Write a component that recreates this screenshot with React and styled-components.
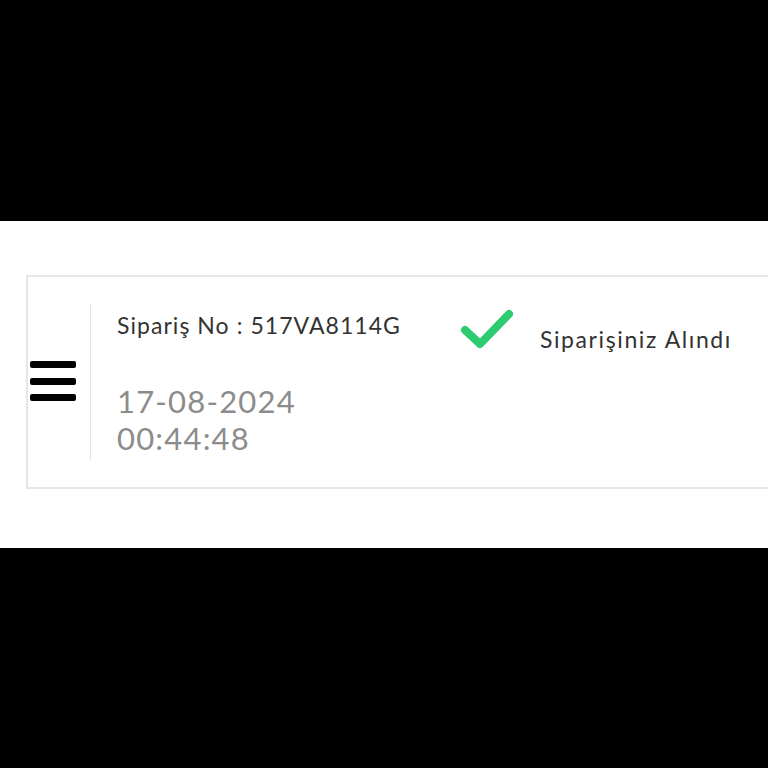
import React from 'react';
import styled, { createGlobalStyle } from 'styled-components';

const GlobalStyle = createGlobalStyle`
  html, body {
    margin: 0;
    padding: 0;
    background: #000;
  }
  body {
    font-family: 'Lato', 'Open Sans', sans-serif;
  }
`;

const Page = styled.div`
  width: 768px;
  height: 768px;
  display: flex;
  flex-direction: column;
  background: #000;
`;

const Band = styled.div`
  margin-top: 221px;
  height: 327px;
  background: #fff;
  padding: 54px 0 0 26px;
  box-sizing: border-box;
`;

const Card = styled.div`
  display: flex;
  align-items: stretch;
  height: 214px;
  border: 2px solid #e6e6e6;
  border-right: none;
  box-sizing: border-box;
  padding: 27px 0 27px 0;
`;

const MenuCol = styled.div`
  width: 62px;
  display: flex;
  align-items: center;
  border-right: 1.5px solid #e2e2e2;
`;

const Burger = styled.div`
  display: flex;
  flex-direction: column;
  gap: 9.5px;
  margin-left: 2px;
  margin-top: -2px;
  span {
    display: block;
    width: 46px;
    height: 7px;
    border-radius: 2px;
    background: #000;
  }
`;

const InfoCol = styled.div`
  width: 343px;
  padding-left: 26px;
  display: flex;
  flex-direction: column;
`;

const OrderNo = styled.div`
  font-size: 23px;
  color: #333;
  letter-spacing: 1.05px;
  line-height: 28px;
  margin-top: 7px;
`;

const Stamp = styled.div`
  font-size: 31px;
  color: #8c8c8c;
  letter-spacing: 1.2px;
  line-height: 37px;
  margin-top: ${p => p.$first ? '44px' : '0'};
`;

const StatusCol = styled.div`
  display: flex;
  align-items: flex-start;
  gap: 26px;
`;

const Check = styled.svg`
  width: 54px;
  height: 42px;
  margin-top: 4px;
`;

const StatusText = styled.div`
  font-size: 23px;
  color: #333;
  letter-spacing: 1.6px;
  margin-top: 21px;
`;

export default function App() {
  return (
    <>
      <GlobalStyle />
      <Page>
        <Band>
          <Card>
            <MenuCol>
              <Burger>
                <span />
                <span />
                <span />
              </Burger>
            </MenuCol>
            <InfoCol>
              <OrderNo>Sipariş No : 517VA8114G</OrderNo>
              <Stamp $first>17-08-2024</Stamp>
              <Stamp>00:44:48</Stamp>
            </InfoCol>
            <StatusCol>
              <Check viewBox="0 0 54 42">
                <path d="M5 22 L20 36 L49 6" fill="none" stroke="#2ecc71" strokeWidth="8" strokeLinecap="round" strokeLinejoin="round" />
              </Check>
              <StatusText>Siparişiniz Alındı</StatusText>
            </StatusCol>
          </Card>
        </Band>
      </Page>
    </>
  );
}
